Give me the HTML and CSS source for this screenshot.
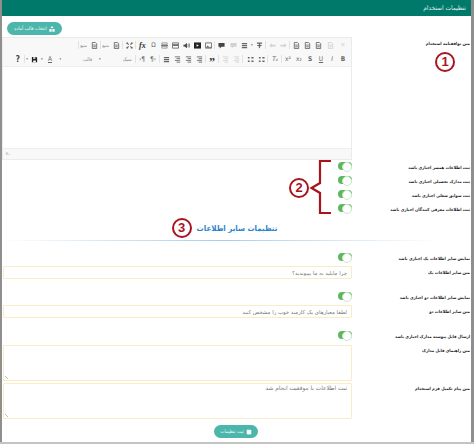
FILE: index.html
```html
<!DOCTYPE html>
<html lang="fa">
<head>
<meta charset="utf-8">
<title>تنظیمات استخدام</title>
<link rel="stylesheet" href="styles.css">
</head>
<body>
<svg class="defs" width="0" height="0">
  <symbol id="i-doc" viewBox="0 0 8 8"><path d="M1.500.5H5L6.500 2v5.500h-5z" fill="none" stroke="currentColor"/><path d="M2.500 3.500h3M2.500 5.500h3" stroke="currentColor"/></symbol>
  <symbol id="i-align" viewBox="0 0 8 8"><path d="M1 1h6M3 3h4M1 5h6M3 7h4" stroke="currentColor"/></symbol>
  <symbol id="i-just" viewBox="0 0 8 8"><path d="M1 1h6v1.500H1zM1 3.300h6v1.500H1zM1 5.600h6v1.500H1z" fill="currentColor"/></symbol>
  <symbol id="i-block" viewBox="0 0 8 8"><path d="M.5 1h7v6h-7z" fill="none" stroke="currentColor"/><path d="M1 3.500h6" stroke="currentColor" stroke-width="2"/></symbol>
  <symbol id="i-list" viewBox="0 0 8 8"><path d="M1 2h2M1 6h2M5 2h2.500M5 6h2.500" stroke="currentColor" stroke-width="1.500"/></symbol>
  <symbol id="i-save" viewBox="0 0 8 8"><path d="M1 1h5l1 1v5H1z" fill="currentColor"/><path d="M2.500 1.500H5V3H2.500zM2.500 5h3v2h-3z" fill="#fff"/></symbol>
  <symbol id="i-full" viewBox="0 0 8 8"><path d="M1 1l2 2M7 1L5 3M1 7l2-2M7 7L5 5" stroke="currentColor" stroke-width="1.300"/><path d="M.5.500h2L.5 2.500zM7.500.500h-2l2 2zM.5 7.500h2l-2-2zM7.500 7.500h-2l2-2z" fill="currentColor"/></symbol>
  <symbol id="i-media" viewBox="0 0 8 8"><path d="M0 .5h8v7H0z" fill="currentColor"/><path d="M3 2.500 5.500 4 3 5.500z" fill="#fff"/></symbol>
  <symbol id="i-sound" viewBox="0 0 8 8"><path d="M.5 3h1.500L4.500 1v6L2 5H.5z" fill="currentColor"/><path d="M5.500 2.500q1 1.500 0 3M6.800 1.500q1.500 2.500 0 5" fill="none" stroke="currentColor" stroke-width=".8"/></symbol>
  <symbol id="i-img" viewBox="0 0 8 8"><path d="M.5 1h7v6h-7z" fill="none" stroke="currentColor"/><path d="M1 6.500 3 4l2 2 1-1 1 1.500z" fill="currentColor"/></symbol>
  <symbol id="i-comment" viewBox="0 0 8 8"><path d="M.5 1h7v4.500H4L2 7.500v-2H.5z" fill="currentColor"/></symbol>
  <symbol id="i-hr" viewBox="0 0 8 8"><path d="M1 1h6v2H1zM1 5h6v2H1z" fill="none" stroke="currentColor" stroke-width=".7"/><path d="M0 4h8" stroke="currentColor"/></symbol>
  <symbol id="i-undo" viewBox="0 0 8 8"><path d="M3 1.500 .5 4 3 6.500V5h4.500V3H3z" fill="currentColor"/></symbol>
  <symbol id="i-redo" viewBox="0 0 8 8"><path d="M5 1.500 7.500 4 5 6.500V5H.5V3H5z" fill="currentColor"/></symbol>
  <symbol id="i-spell" viewBox="0 0 8 8"><path d="M1 .5h6v1.500H4.800v1.300h1.700v1.200H4.800V6L3.200 7.500V4.500H1.500V3.300h1.700V2H1z" fill="currentColor"/></symbol>
</svg>
<main class="page">
  <header class="topbar">تنظیمات استخدام</header>

  <section class="editor-row">
    <div class="field-col">
      <button class="pill pill-template" type="button">
        <svg class="pill-icon" viewBox="0 0 8 8"><path d="M4 0 6 2.500H2zM.5 4h3v3.500h-3zM4.500 4h3v3.500h-3z" fill="currentColor"/></svg>
        انتخاب قالب آماده
      </button>
      <div class="editor">
        <div class="toolbar">
          <div class="tb-line">
            <span class="tb tb-faint tb-x">✕</span>
            <svg class="tb tb-faint tb-after"><use href="#i-doc"/></svg><svg class="tb"><use href="#i-doc"/></svg><svg class="tb"><use href="#i-doc"/></svg><svg class="tb"><use href="#i-doc"/></svg>
            <i class="sep"></i>
            <svg class="tb tb-faint"><use href="#i-redo"/></svg><svg class="tb tb-faint"><use href="#i-undo"/></svg>
            <i class="sep"></i>
            <svg class="tb"><use href="#i-spell"/></svg><span class="tb-caret">▾</span><svg class="tb"><use href="#i-just"/></svg>
            <svg class="tb tb-faint tb-after"><use href="#i-comment"/></svg><svg class="tb tb-mid"><use href="#i-comment"/></svg>
            <i class="sep"></i>
            <svg class="tb"><use href="#i-img"/></svg><svg class="tb tb-dark"><use href="#i-media"/></svg><svg class="tb tb-mid"><use href="#i-sound"/></svg><svg class="tb"><use href="#i-block"/></svg><svg class="tb"><use href="#i-hr"/></svg>
            <span class="tb">Ω</span><span class="tb tb-fx">fx</span>
            <i class="sep"></i>
            <svg class="tb"><use href="#i-full"/></svg>
            <i class="sep"></i>
            <svg class="tb"><use href="#i-doc"/></svg><span class="tb-word">منبع</span>
            <i class="sep"></i>
            <svg class="tb"><use href="#i-doc"/></svg><span class="tb-word">منبع</span>
            <i class="sep"></i>
          </div>
          <div class="tb-line">
            <span class="tb tb-b">B</span><span class="tb tb-i">I</span><span class="tb tb-u">U</span><span class="tb tb-s">S</span><span class="tb">x₂</span><span class="tb">x²</span>
            <i class="sep"></i>
            <span class="tb tb-i tb-after">T<small>x</small></span>
            <i class="sep"></i>
            <svg class="tb"><use href="#i-list"/></svg><svg class="tb tb-after"><use href="#i-list"/></svg>
            <i class="sep"></i>
            <svg class="tb tb-faint"><use href="#i-align"/></svg><svg class="tb tb-faint"><use href="#i-align"/></svg>
            <i class="sep"></i>
            <span class="tb tb-quote">”</span>
            <i class="sep"></i>
            <svg class="tb"><use href="#i-align"/></svg><svg class="tb"><use href="#i-align"/></svg><svg class="tb"><use href="#i-align"/></svg><svg class="tb"><use href="#i-just"/></svg>
            <i class="sep"></i>
            <span class="tb">¶‹</span><span class="tb">›¶</span>
            <i class="sep"></i>
            <span class="combo">سبک<b>▾</b></span><span class="combo">قالب<b>▾</b></span>
            <span class="tb tb-a tb-after">A</span><span class="tb-caret">▾</span><svg class="tb tb-dark"><use href="#i-save"/></svg><span class="tb-caret">▾</span>
            <i class="sep"></i>
            <span class="tb tb-help">?</span>
          </div>
        </div>
        <div class="editor-body"></div>
        <div class="editor-foot">h..</div>
      </div>
    </div>
    <div class="label-col editor-label">
      <label>متن توافقنامه استخدام</label>
      <span class="badge badge-one">1</span>
    </div>
  </section>

  <section class="switches">
    <div class="row row-switch"><div class="field-col"><span class="switch"></span></div><div class="label-col"><label>ثبت اطلاعات همسر اجباری باشد</label></div></div>
    <div class="row row-switch"><div class="field-col"><span class="switch"></span></div><div class="label-col"><label>ثبت مدارک تحصیلی اجباری باشد</label></div></div>
    <div class="row row-switch"><div class="field-col"><span class="switch"></span></div><div class="label-col"><label>ثبت سوابق شغلی اجباری باشد</label></div></div>
    <div class="row row-switch"><div class="field-col"><span class="switch"></span></div><div class="label-col"><label>ثبت اطلاعات معرفی کنندگان اجباری باشد</label></div></div>
    <div class="brace-note">
      <svg class="brace" viewBox="0 0 24 54"><path d="M23 1H12V23L3.500 28l8.500 5v20h11" fill="none" stroke="#a8141e" stroke-width="2.200"/></svg>
      <span class="badge badge-two">2</span>
    </div>
  </section>

  <h2 class="section-title"><span>تنظیمات سایر اطلاعات</span><span class="badge">3</span></h2>
  <div class="divider"></div>

  <section class="other">
    <div class="row row-switch"><div class="field-col"><span class="switch"></span></div><div class="label-col"><label>نمایش سایر اطلاعات یک اجباری باشد</label></div></div>
    <div class="row row-input"><div class="field-col"><input class="text-input" type="text" value="چرا مایلید به ما بپیوندید؟"></div><div class="label-col"><label>متن سایر اطلاعات یک</label></div></div>
    <div class="row row-switch row-gap"><div class="field-col"><span class="switch"></span></div><div class="label-col"><label>نمایش سایر اطلاعات دو اجباری باشد</label></div></div>
    <div class="row row-input"><div class="field-col"><input class="text-input" type="text" value="لطفا معیارهای یک کارمند خوب را مشخص کنید"></div><div class="label-col"><label>متن سایر اطلاعات دو</label></div></div>
    <div class="row row-switch row-gap"><div class="field-col"><span class="switch"></span></div><div class="label-col"><label>ارسال فایل پیوسته مدارک اجباری باشد</label></div></div>
    <div class="row row-area"><div class="field-col"><textarea class="text-area"></textarea></div><div class="label-col"><label>متن راهنمای فایل مدارک</label></div></div>
    <div class="row row-area"><div class="field-col"><textarea class="text-area">ثبت اطلاعات با موفقیت انجام شد</textarea></div><div class="label-col"><label>متن پیام تکمیل فرم استخدام</label></div></div>
  </section>

  <div class="actions">
    <button class="pill pill-save" type="button">
      <svg class="pill-icon" viewBox="0 0 8 8"><use href="#i-save"/></svg>
      ثبت تنظیمات
    </button>
  </div>
</main>
</body>
</html>
```
FILE: styles.css
```css
* { box-sizing: border-box; }
html, body { margin: 0; padding: 0; background: #c4c4c4; }
body { width: 474px; height: 444px; overflow: hidden; font-family: "DejaVu Sans Condensed", "DejaVu Sans", sans-serif; }
.defs { position: absolute; }
.page {
  width: 474px; height: 442px; background: #fff;
  border-left: 2px solid #8f8f8f; border-right: 3px solid #8f8f8f;
  overflow: hidden;
}
.topbar {
  height: 16px; background: #00796b; color: #dff1ee;
  direction: rtl; font-size: 6.500px; line-height: 16px; padding-right: 5px;
}
.editor-row { display: flex; align-items: flex-start; padding-top: 6px; }
.field-col { width: 350px; flex: none; display: flex; flex-direction: column; }
.label-col {
  flex: 1; direction: rtl; font-size: 4.300px; font-weight: 700; color: #1c1c1c;
  padding-right: 1px; white-space: nowrap; opacity: .99;
}
.editor-label { padding-top: 18px; }
.editor-label label { display: block; line-height: 7px; }
.pill {
  border: 0; border-radius: 7px; background: #4db6ac; color: #eef9f7;
  font-family: inherit; font-size: 4.800px; height: 13px; padding: 0;
  display: inline-flex; align-items: center; justify-content: center; gap: 2px; direction: ltr;
}
.pill-template { width: 55px; margin-left: 5px; flex-direction: row-reverse; }
.pill-save { width: 44px; flex-direction: row-reverse; }
.pill-icon { width: 6px; height: 6px; color: #fff; }
.editor { margin-top: 2px; height: 123px; border: 1px solid #ebebeb; display: flex; flex-direction: column; }
.toolbar { height: 29px; background: #f8f8f8; border-bottom: 1px solid #eee; padding-right: 4.500px; }
.tb-line { height: 14px; display: flex; align-items: center; flex-direction: row-reverse; justify-content: flex-start; gap: 4px; direction: ltr; color: #666; }
.tb { width: 7px; height: 7px; font-size: 6.500px; line-height: 7px; text-align: center; color: #666; flex: none; overflow: visible; white-space: nowrap; }
.tb small { font-size: 4px; }
.tb-faint { color: #d2d2d2; }
.tb-mid { color: #444; }
.tb-dark { color: #222; }
.tb-x { margin-left: 2px; }
.tb-after { margin-left: 1px; }
.tb-b, .tb-s { font-weight: 700; }
.tb-i { font-style: italic; }
.tb-u, .tb-a { text-decoration: underline; }
.tb-fx { font-family: "Liberation Serif", serif; font-style: italic; font-weight: 700; font-size: 8px; color: #333; }
.tb-help { font-weight: 700; font-size: 8px; color: #444; }
.tb-quote { font-family: "Liberation Serif", serif; font-size: 12px; font-weight: 700; color: #333; line-height: 12px; height: 7px; }
.tb-caret { font-size: 3.500px; color: #666; flex: none; margin: 0 -1px; }
.tb-word { font-size: 4.500px; color: #888; flex: none; margin-left: -2px; width: 7px; direction: rtl; white-space: nowrap; }
.sep { width: 1px; height: 8px; background: #e2e2e2; flex: none; margin: 0 -1.500px; }
.combo { width: 37.500px; flex: none; display: flex; justify-content: space-between; flex-direction: row-reverse; font-size: 4.800px; color: #888; padding: 0 3px 0 2px; margin-right: -2px; }
.combo b { font-size: 3.500px; font-weight: 400; color: #666; }
.editor-body { flex: 1; background: #fff; }
.editor-foot { height: 11px; background: #f8f8f8; border-top: 1px solid #eee; font-size: 4px; line-height: 10px; padding-left: 3px; color: #888; }
.switches { position: relative; margin-top: 2px; }
.row { display: flex; align-items: flex-start; }
.row-switch { height: 14px; }
.row-switch .field-col { align-items: flex-end; }
.row-switch .label-col { padding-top: 2px; line-height: 7px; }
.switch { width: 14px; height: 8px; border-radius: 4px; background: #5cb85c; display: block; position: relative; }
.switch::after {
  content: ""; position: absolute; right: 0; top: 0; width: 8px; height: 8px;
  border-radius: 50%; background: #fff; border: 1px solid #cfe6cf;
}
.badge {
  width: 20px; height: 20px; border-radius: 50%; border: 2px solid #a8141e; color: #a8141e;
  font-family: "Liberation Sans", sans-serif; font-size: 13px; font-weight: 700; line-height: 16px;
  display: inline-block; text-align: center; direction: ltr; flex: none;
}
.badge-one { margin: 5px 15px 0 0; display: block; }
.brace-note { position: absolute; left: 287px; top: -2px; width: 43px; height: 54px; }
.brace { position: absolute; right: 0; top: 0; width: 24px; height: 54px; }
.badge-two { position: absolute; left: 0; top: 18px; }
.section-title {
  margin: 0; height: 20px; display: flex; align-items: center; justify-content: center; gap: 5px;
  direction: rtl; color: #2c82c9; font-size: 7.900px; font-weight: 700;
  padding-right: 24px;
}
.divider { height: 1px; margin: 2px 30px 0 0; background: linear-gradient(to right, transparent, #a8cdea 50%, transparent); }
.other { margin-top: 12px; }
.row-gap { margin-top: 13px; }
.row-input { height: 13px; margin-top: -1px; }
.row-input .label-col { line-height: 13px; }
.row-area { height: 38px; }
.row-area .label-col { padding-top: 2px; line-height: 7px; }
.text-input, .text-area {
  display: block; width: 349px; margin-left: 1px; border: 1.500px solid #fbecc8; background: #fff; outline: 0;
  direction: rtl; font-family: "DejaVu Sans", sans-serif; color: #777; padding: 0 4px; border-radius: 1px;
}
.text-input { height: 13px; font-size: 5.400px; }
.text-area {
  height: 36px; padding-top: 1px; font-size: 5.800px; resize: none;
  background: linear-gradient(to top right, transparent 35%, #bbb 35%, #bbb 65%, transparent 65%) left 1px bottom 1px / 3px 3px no-repeat #fff;
}
.actions { display: flex; justify-content: center; margin-top: 4px; padding-right: 1px; }
```
